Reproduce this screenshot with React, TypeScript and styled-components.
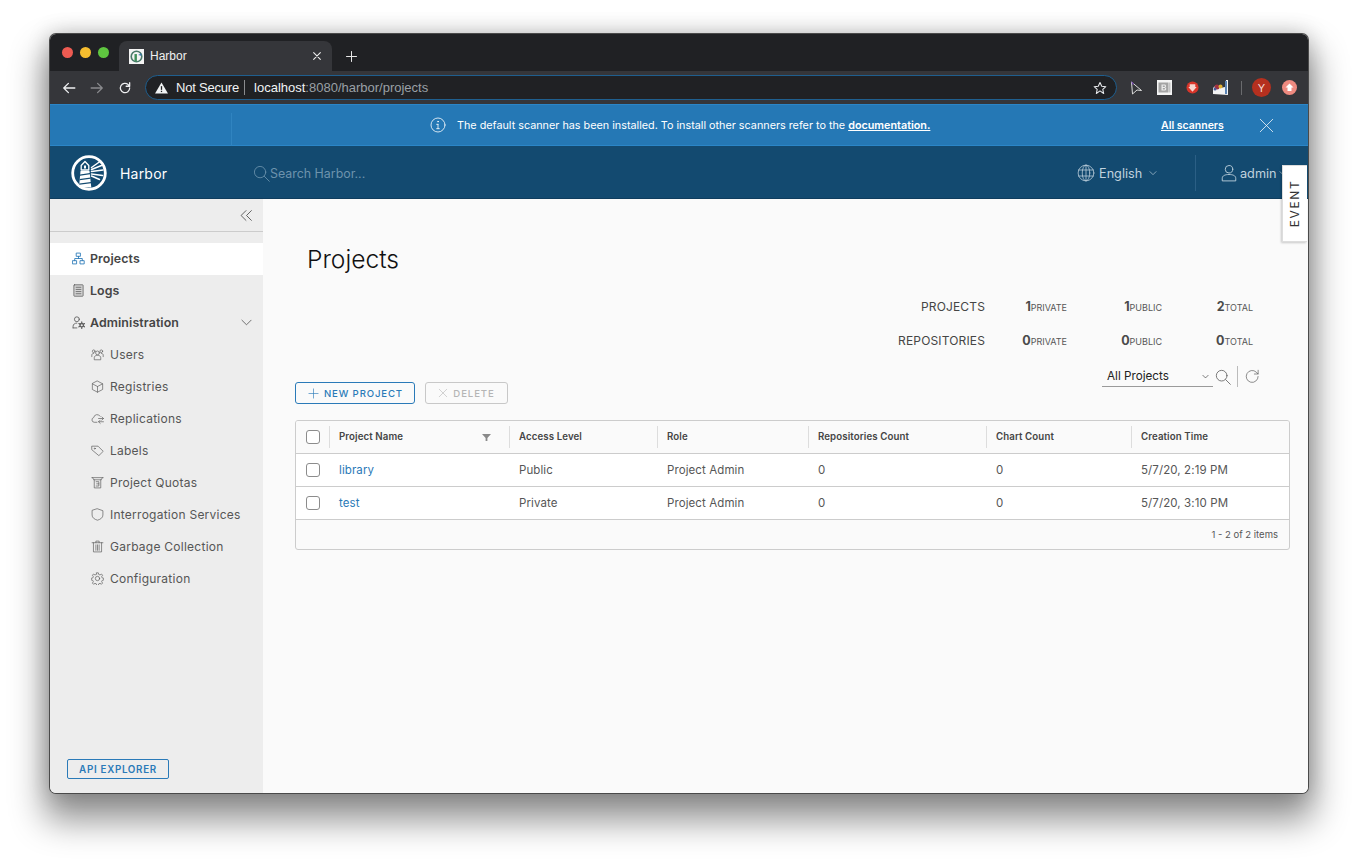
import React from "react";
import styled, { createGlobalStyle } from "styled-components";

const Global = createGlobalStyle`
  html, body { margin: 0; padding: 0; background: #fff; width: 1358px; height: 859px; overflow: hidden; }
  * { box-sizing: border-box; }
  body { font-family: Inter, "Liberation Sans", sans-serif; }
`;
const Page = styled.div`
  width: 1358px; height: 859px; padding: 34px 50px 66px 50px; background: #fff;
`;
const Win = styled.div`
  position: relative; width: 1258px; height: 759px; display: flex; flex-direction: column;
  border-radius: 6px; overflow: hidden; background: #fafafa;
  box-shadow: 0 0 0 1px #4a4a4a, 0 22px 34px 6px rgba(0,0,0,.42), 0 0 22px rgba(0,0,0,.22);
`;
const TabStrip = styled.div`
  height: 37px; background: #202124; display: flex; align-items: flex-end; padding-left: 69px; flex: none; position: relative;
`;
const Lights = styled.div`
  position: absolute; left: 12px; top: 13px; display: flex; gap: 7px;
`;
const Light = styled.span<{ $c: string }>`
  width: 11px; height: 11px; border-radius: 50%; background: ${p => p.$c}; display: block;
`;
const Tab = styled.div`
  width: 213px; height: 30px; background: #35363a; border-radius: 8px 8px 0 0; display: flex; align-items: center;
  padding: 0 10px 0 10px; gap: 6px; color: #f0f0f0; font-family: "Liberation Sans", sans-serif; font-size: 12px;
`;
const Fav = styled.span`
  width: 15px; height: 15px; background: #f4f4f4; display: flex; align-items: center; justify-content: center; flex: none;
`;
const TabTitle = styled.span` flex: 1; `;
const NewTab = styled.span`
  display: flex; margin: 0 0 3px 12px; color: #e6e6e6; height: 24px; align-items: center;
`;
const Toolbar = styled.div`
  height: 33px; background: #35363a; display: flex; align-items: center; flex: none; padding-left: 12px; color: #e8eaed;
`;
const NavBtn = styled.span<{ $dim?: boolean }>`
  width: 14px; height: 14px; display: flex; align-items: center; justify-content: center; margin-right: 14px; color: ${p => p.$dim ? "#8a8b8e" : "#eeeff1"};
`;
const Omni = styled.div`
  width: 972px; height: 25px; margin-left: -1px; background: #202124; border: 1.5px solid #1f5f8f; border-radius: 13px; display: flex; align-items: center;
  padding: 0 9px 0 9px; font-family: "Liberation Sans", sans-serif; font-size: 13px; color: #f1f3f4;
`;
const Secure = styled.span`
  display: flex; align-items: center; gap: 8px; padding-right: 5px; border-right: 1px solid #8a8b8e; height: 15px; margin-right: 9px; letter-spacing: -.2px;
`;
const Host = styled.span` color: #f1f3f4; `;
const Path = styled.span` color: #9aa0a6; `;
const Star = styled.span` margin-left: auto; display: flex; color: #e8eaed; `;
const Exts = styled.div`
  display: flex; align-items: center; margin-left: 5px;
`;
const Ext = styled.span`
  display: flex; align-items: center; justify-content: center; width: 28px;
`;
const ExtSep = styled.span` width: 1px; height: 14px; background: #6a6b6e; margin: 0 10px 0 7px; `;
const Avatar = styled.span`
  width: 19px; height: 19px; border-radius: 50%; background: #b5301f; color: #f4dcd8; font: 11px "Liberation Sans", sans-serif;
  display: flex; align-items: center; justify-content: center; margin-right: 11px;
`;
const Banner = styled.div`
  height: 42px; background: #2578b5; border-top: 1px solid #2b86c8; border-bottom: 1px solid #2b86c8; flex: none; color: #fff; position: relative;
  display: flex; align-items: center; font-size: 10.8px; padding-left: 380px;
`;
const BannerRule = styled.span`
  position: absolute; left: 181px; top: 8px; bottom: -1px; width: 1px; background: #3084c0;
`;
const BannerIcon = styled.span` display: flex; margin-right: 11px; `;
const BannerLink = styled.a`
  color: #fff; font-weight: 600; text-decoration: underline; margin-left: 3px;
`;
const AllScanners = styled.a`
  position: absolute; left: 1111px; color: #fff; font-weight: 600; text-decoration: underline; font-size: 10.5px;
`;
const BannerClose = styled.span`
  position: absolute; left: 1209px; top: 13px; display: flex;
`;
const Header = styled.div`
  height: 53px; padding-top: 2px; background: #134a70; flex: none; display: flex; align-items: center; color: #fff; position: relative; border-bottom: 1px solid #0f3d5e;
`;
const Brand = styled.div`
  display: flex; align-items: center; padding-left: 21px; width: 203px; font-size: 14px; letter-spacing: .2px; gap: 13px;
`;
const Search = styled.div`
  display: flex; align-items: center; color: #6d93ad; font-size: 12.4px;
`;
const HeaderRight = styled.div`
  margin-left: auto; display: flex; align-items: center; color: #c0d2de; font-size: 12.7px; height: 100%;
`;
const Lang = styled.div`
  display: flex; align-items: center; gap: 4px; width: 118px;
`;
const LangChevron = styled.span` margin-left: 3px; display: flex; `;
const HSep = styled.span` width: 1px; height: 36px; background: #2b5f85; `;
const User = styled.div`
  display: flex; align-items: center; gap: 2px; padding-left: 24px; width: 112px;
`;
const EventTab = styled.div`
  position: absolute; right: 1px; top: 131px; width: 25px; height: 77px; background: #fff; border: 1px solid #ddd; border-right: 0;
  box-shadow: -1px 1px 2px rgba(0,0,0,.2); display: flex; align-items: center; justify-content: center;
  z-index: 2; font-size: 12px; color: #333; letter-spacing: 1.6px;
`;
const EventLabel = styled.span` transform: rotate(-90deg); white-space: nowrap; `;
const Body = styled.div` flex: 1; display: flex; min-height: 0; `;
const Side = styled.aside`
  width: 213px; background: #ededed; display: flex; flex-direction: column; flex: none;
`;
const Collapse = styled.div`
  height: 33px; border-bottom: 1px solid #ccc; display: flex; align-items: center; justify-content: flex-end; padding-right: 10px; margin-bottom: 11px; color: #444;
`;
const Item = styled.div<{ $active?: boolean; $sub?: boolean }>`
  height: 32px; display: flex; align-items: center; flex: none; padding-bottom: 1px;
  padding-left: ${p => p.$sub ? 41 : 22}px; gap: ${p => p.$sub ? 6 : 5}px;
  background: ${p => p.$active ? "#fff" : "transparent"};
  color: ${p => p.$sub ? "#565656" : "#454545"};
  font-size: ${p => p.$sub ? 12 : 12.4}px; font-weight: ${p => p.$sub ? 400 : 600};
  letter-spacing: ${p => p.$sub ? ".25px" : ".1px"};
`;
const ItemIcon = styled.span<{ $blue?: boolean }>`
  display: flex; width: 13px; height: 13px; color: ${p => p.$blue ? "#2a7ab8" : "#5f5f5f"}; flex: none;
`;
const ItemChevron = styled.span` margin-left: auto; margin-right: 11px; display: flex; color: #565656; `;
const ApiBtn = styled.button`
  margin: auto 0 14px 17px; width: 102px; height: 20px; background: transparent; border: 1px solid #2a7ab8; border-radius: 2px;
  color: #2a7ab8; font: 600 9.8px Inter, sans-serif; letter-spacing: .7px; padding: 0; flex: none;
`;
const Main = styled.main` flex: 1; background: #fafafa; padding: 0 18px 0 32px; display: flex; flex-direction: column; min-width: 0; `;
const Title = styled.h1`
  margin: 44px 0 0 12px; font-size: 24.6px; line-height: 32px; font-weight: 300; color: #111; height: 32px;
`;
const Stats = styled.div`
  margin-top: 15px; display: grid; grid-template-columns: 690px 82px 95px 91px; grid-auto-rows: 33.5px; align-items: center; justify-items: end;
`;
const StatLabel = styled.div` font-size: 12px; color: #454545; letter-spacing: .15px; `;
const StatVal = styled.div`
  display: flex; align-items: baseline; font-size: 9px; color: #565656;
`;
const StatNum = styled.b` font-size: 12.5px; font-weight: 700; color: #4a4a4a; `;
const ActionRow = styled.div`
  display: flex; align-items: flex-start; margin-top: 4px; height: 45px;
`;
const BtnNew = styled.button`
  height: 22px; width: 120px; margin-top: 21px; background: #fafafa; border: 1px solid #2a7ab8; border-radius: 3px; color: #2a7ab8;
  font: 500 9.6px Inter, sans-serif; letter-spacing: .85px; display: flex; align-items: center; gap: 5px; padding: 0 0 0 12px;
`;
const BtnDel = styled.button`
  height: 22px; width: 83px; margin: 21px 0 0 10px; background: #fafafa; border: 1px solid #c8c8c8; border-radius: 3px; color: #b5b5b5;
  font: 500 9.6px Inter, sans-serif; letter-spacing: .9px; display: flex; align-items: center; justify-content: center; gap: 5px; padding: 0;
`;
const Filter = styled.div`
  margin-left: auto; margin-right: 30px; margin-top: 5px; display: flex; align-items: center;
`;
const SelectBox = styled.div`
  width: 111px; height: 21px; border-bottom: 1px solid #9a9a9a; display: flex; align-items: center; justify-content: space-between; padding: 0 4px 0 5px;
  font-size: 11.7px; color: #222;
`;
const FilterIcon = styled.span` display: flex; margin-left: 2px; color: #5a5a5a; `;
const FilterSep = styled.span` width: 1px; height: 21px; background: #bbb; margin: 0 5px 0 6px; `;
const Table = styled.div`
  margin-top: 14px; border: 1px solid #ccc; border-radius: 3px; background: #fafafa; overflow: hidden;
`;
const Row = styled.div<{ $head?: boolean }>`
  display: grid; grid-template-columns: 33px 180px 148px 151px 178px 145px 1fr; align-items: center;
  height: 33px; padding-bottom: 1px; background: ${p => p.$head ? "#fafafa" : "#fff"}; border-bottom: 1px solid #ccc;
  font-size: 11.5px; color: #565656; letter-spacing: .1px;
`;
const HeadCell = styled.div`
  height: 22px; display: flex; align-items: center; padding-left: 9px; border-left: 1px solid #ddd; font-size: 9.7px; font-weight: 600; color: #454545; position: relative;
`;
const Cell = styled.div` padding-left: 10px; `;
const LinkCell = styled(Cell)` color: #2a7ab8; `;
const CheckCell = styled.div` display: flex; justify-content: center; padding-left: 1px; `;
const Check = styled.span`
  width: 14px; height: 14px; border: 1px solid #8c8c8c; border-radius: 3px; background: #fff; display: block;
`;
const HeadFilter = styled.span` position: absolute; right: 18px; top: 7px; display: flex; color: #8a8a8a; `;
const Foot = styled.div`
  height: 29px; display: flex; align-items: center; justify-content: flex-end; padding-right: 11px; font-size: 9.5px; color: #565656;
`;

const S = (p: { s?: number; sw?: number; children: React.ReactNode; vb?: string }) => (
  <svg width={p.s ?? 14} height={p.s ?? 14} viewBox={p.vb ?? "0 0 24 24"} fill="none" stroke="currentColor" strokeWidth={p.sw ?? 1.5} strokeLinecap="round" strokeLinejoin="round">{p.children}</svg>
);
const Close = ({ s = 12, sw = 1.5 }: { s?: number; sw?: number }) => <S s={s} sw={sw}><path d="M4 4l16 16M20 4L4 20" /></S>;
const SearchI = ({ s = 17 }: { s?: number }) => <S s={s} sw={1.2}><circle cx="10" cy="10" r="8" /><path d="M16 16l7 7" /></S>;
const Chevron = ({ s = 8 }: { s?: number }) => <S s={s} sw={2}><path d="M3 8l9 9 9-9" /></S>;

const Logo = () => (
  <svg width="36" height="36" viewBox="0 0 36 36">
    <circle cx="18" cy="18" r="16.3" fill="none" stroke="#fff" strokeWidth="2.8" />
    <path d="M14 6.500l3.800 4v4.500H10.200v-4.500z" fill="none" stroke="#fff" strokeWidth="1.300" strokeLinejoin="round" />
    <rect x="13" y="10.500" width="2" height="3" fill="#fff" />
    <path d="M9.500 16h9l1.800 16.500H8z" fill="#fff" />
    <g fill="#134a70">
      <path d="M9 19.500l10-1.500v1.300L9 20.800zM8.700 24l10.900-1.500v1.300L8.600 25.300zM8.400 28.500l11.600-1.600v1.300L8.300 29.800z" />
    </g>
    <g stroke="#fff" strokeWidth="1.500" fill="none" strokeLinecap="round">
      <path d="M20.500 12.500L29 6.500M20.500 14.500l10-4M20.500 16.500l11.500-1.500M20.500 19l11 1.500M20.500 21l8 3.500" />
    </g>
  </svg>
);

const sideIcons: Record<string, React.ReactNode> = {
  Projects: <S s={13} sw={1.6}><rect x="8.500" y="2" width="7" height="6" /><rect x="1.500" y="16" width="7" height="6" /><rect x="15.500" y="16" width="7" height="6" /><path d="M12 8v4M5 16v-4h14v4" /></S>,
  Logs: <S s={13} sw={1.500}><rect x="3.500" y="1.500" width="17" height="21" rx="1" fill="#d6d6d6" /><path d="M7.500 6h9M7.500 10h9M7.500 14h9M7.500 18h9" /></S>,
  Administration: <S s={13} sw={1.6}><circle cx="9" cy="6" r="4.500" /><path d="M2 22v-3c0-3.500 3-6 7-6M2 22h7" /><circle cx="18" cy="17" r="3.200" strokeWidth="2.400" /><path d="M18 11v2M18 21v2M12.800 14l1.700 1M21.500 19l1.700 1M12.800 20l1.700-1M21.500 15l1.700-1" strokeWidth="2.200" /></S>,
  Users: <S s={13} sw={1.3}><circle cx="12" cy="9" r="3.500" /><circle cx="5" cy="6" r="2.500" /><circle cx="19" cy="6" r="2.500" /><path d="M6 21v-3c0-3 2.500-4.500 6-4.500s6 1.500 6 4.500v3zM1.500 16v-3c0-2 1.500-3 3.500-3M22.500 16v-3c0-2-1.500-3-3.500-3" /></S>,
  Registries: <S s={13} sw={1.3}><path d="M12 2l9.500 5v10.500L12 22.500l-9.500-5V7zM2.500 7l9.500 5 9.500-5M12 12v10.500" /></S>,
  Replications: <S s={13} sw={1.3}><path d="M11 19H6a4.500 4.500 0 0 1-1-8.800A6.500 6.500 0 0 1 17 8M14 12h9M20 9l3 3-3 3M23 18h-9M17 15l-3 3 3 3" /></S>,
  Labels: <S s={13} sw={1.3}><path d="M2 4h11l9.500 9.500-8 8L2 11z" /><circle cx="7" cy="8.500" r="1" /></S>,
  "Project Quotas": <S s={13} sw={1.3}><path d="M1.500 3h21M3 3l2 4h14l2-4M6 7v15h12V7M9.500 10.500h5v8h-5M10.500 14.500h4" /></S>,
  "Interrogation Services": <S s={13} sw={1.3}><path d="M12 1.500l10 3.500v8c0 5-4.500 8-10 9.500C6.500 21 2 18 2 13V5z" /></S>,
  "Garbage Collection": <S s={13} sw={1.3}><path d="M2 5h20M9 5V2h6v3M4.500 5v17h15V5M9 9v10M12 9v10M15 9v10" /></S>,
  Configuration: <S s={13} sw={1.3}><circle cx="12" cy="12" r="4" /><path d="M10.500 1.500h3l.7 3 2.400 1 2.700-1.700 2.100 2.100-1.700 2.700 1 2.400 3 .7v3l-3 .7-1 2.400 1.700 2.700-2.100 2.100-2.700-1.700-2.400 1-.7 3h-3l-.7-3-2.400-1-2.700 1.700-2.100-2.100 1.700-2.700-1-2.400-3-.7v-3l3-.7 1-2.400-1.700-2.700 2.100-2.100 2.700 1.700 2.400-1z" /></S>,
};

const subs = ["Users", "Registries", "Replications", "Labels", "Project Quotas", "Interrogation Services", "Garbage Collection", "Configuration"];

const rows = [
  { name: "library", access: "Public", time: "5/7/20, 2:19 PM" },
  { name: "test", access: "Private", time: "5/7/20, 3:10 PM" },
];

const stats = [
  { label: "PROJECTS", v: ["1", "1", "2"] },
  { label: "REPOSITORIES", v: ["0", "0", "0"] },
];
const kinds = ["PRIVATE", "PUBLIC", "TOTAL"];

export default function App() {
  return (
    <Page>
      <Global />
      <Win>
        <TabStrip>
          <Lights><Light $c="#ee5b52" /><Light $c="#f6bd2f" /><Light $c="#5fc640" /></Lights>
          <Tab>
            <Fav>
              <svg width="13" height="13" viewBox="0 0 16 16"><circle cx="8" cy="8" r="6.500" fill="none" stroke="#4a7a6a" strokeWidth="2" /><rect x="5.500" y="5" width="3" height="9" fill="#3f8f5a" /><path d="M10 6l4-2v3z" fill="#3a78b0" /></svg>
            </Fav>
            <TabTitle>Harbor</TabTitle>
            <Close s={10} sw={2.600} />
          </Tab>
          <NewTab><S s={15} sw={1.600}><path d="M12 4v16M4 12h16" /></S></NewTab>
        </TabStrip>
        <Toolbar>
          <NavBtn><S s={14} sw={2.200}><path d="M22 12H3M11 4l-8 8 8 8" /></S></NavBtn>
          <NavBtn $dim><S s={14} sw={2.200}><path d="M2 12h19M13 4l8 8-8 8" /></S></NavBtn>
          <NavBtn><S s={16} sw={2.200}><path d="M20 12a8 8 0 1 1-2.500-5.800L20 9M20 3v6h-6" /></S></NavBtn>
          <Omni>
            <Secure>
              <svg width="13" height="12" viewBox="0 0 14 13"><path d="M7 .5l7 12H0z" fill="#f1f3f4" /><rect x="6.300" y="4.500" width="1.400" height="4" fill="#202124" /><rect x="6.300" y="9.500" width="1.400" height="1.400" fill="#202124" /></svg>
              Not Secure
            </Secure>
            <Host>localhost</Host><Path>:8080/harbor/projects</Path>
            <Star><S s={14} sw={1.800}><path d="M12 2.500l3 6.500 7 .8-5.200 4.700 1.500 7L12 17l-6.300 4.500 1.500-7L2 9.800 9 9z" /></S></Star>
          </Omni>
          <Exts>
            <Ext><svg width="13" height="14" viewBox="0 0 13 14"><path d="M1.500 1l10 8.500-4.500-.5L2.500 13z" fill="none" stroke="#ddd" strokeWidth="1" /><path d="M1 0l1.500 4L4 2.500z" fill="#6a3fa0" /></svg></Ext>
            <Ext><svg width="15" height="15" viewBox="0 0 15 15"><rect width="15" height="15" fill="#f4f4f4" /><rect x="1.500" y="2.500" width="10" height="10" fill="#a4a4a4" /><rect x="12" y="2.500" width="1.500" height="10" fill="#c4c4c4" /><path d="M4.500 4.500h3c2 0 2 2.800.5 3 1.800.2 1.800 3-.5 3h-3zM5.800 5.500v1.500h1.500c.9 0 .9-1.500 0-1.500zM5.800 8v1.500h1.600c1 0 1-1.500 0-1.500z" fill="#ececec" fillRule="evenodd" /></svg></Ext>
            <Ext><svg width="13" height="13" viewBox="0 0 14 14"><circle cx="7" cy="7" r="6.500" fill="#d8352a" /><path d="M4 3.500h6v3h1.500L7 11.500 2.500 6.500H4z" fill="#f6d5d0" /></svg></Ext>
            <Ext><svg width="16" height="15" viewBox="0 0 16 15"><path d="M1 14V8l3-3 4 3 5-1 1-7h2v15z" fill="#f2f2f2" /><rect x="13" y="1" width="2" height="13" fill="#5a83b3" /><circle cx="5" cy="7" r="2.500" fill="#a03040" /><circle cx="8.500" cy="6.500" r="2" fill="#e0b030" /><circle cx="3" cy="9" r="1.500" fill="#4a5a9a" /></svg></Ext>
            <ExtSep />
            <Avatar>Y</Avatar>
            <svg width="15" height="15" viewBox="0 0 15 15"><circle cx="7.500" cy="7.500" r="7.500" fill="#ee8a80" /><path d="M7.500 3.500l4 4H9.500v3.500h-4V7.500h-2z" fill="#fff" /></svg>
          </Exts>
        </Toolbar>
        <Banner>
          <BannerRule />
          <BannerIcon><S s={16} sw={1.200}><circle cx="12" cy="12" r="10.500" /><path d="M12 11v6.500M10 17.500h4M10 11h2" /><circle cx="12" cy="7" r=".6" /></S></BannerIcon>
          The default scanner has been installed. To install other scanners refer to the
          <BannerLink>documentation.</BannerLink>
          <AllScanners>All scanners</AllScanners>
          <BannerClose><S s={15} sw={1.200}><path d="M2 2l20 20M22 2L2 22" /></S></BannerClose>
        </Banner>
        <Header>
          <Brand><Logo />Harbor</Brand>
          <Search><SearchI />Search Harbor...</Search>
          <HeaderRight>
            <Lang>
              <S s={18} sw={1}><circle cx="12" cy="12" r="10.500" /><ellipse cx="12" cy="12" rx="5" ry="10.500" /><path d="M12 1.500v21M2 8h20M2 16h20" /></S>
              English
              <LangChevron><Chevron /></LangChevron>
            </Lang>
            <HSep />
            <User>
              <S s={18} sw={1.200}><circle cx="12" cy="7" r="5" /><path d="M3 22v-3c0-3.500 4-5 9-5s9 1.500 9 5v3z" /></S>
              admin
              <Chevron />
            </User>
          </HeaderRight>
        </Header>
        <EventTab><EventLabel>EVENT</EventLabel></EventTab>
        <Body>
          <Side>
            <Collapse><S s={13} sw={1.500}><path d="M11 3l-9 9 9 9M21 3l-9 9 9 9" /></S></Collapse>
            <Item $active><ItemIcon $blue>{sideIcons.Projects}</ItemIcon>Projects</Item>
            <Item><ItemIcon>{sideIcons.Logs}</ItemIcon>Logs</Item>
            <Item><ItemIcon>{sideIcons.Administration}</ItemIcon>Administration<ItemChevron><S s={11} sw={1.800}><path d="M2 7l10 10L22 7" /></S></ItemChevron></Item>
            {subs.map(s => (
              <Item $sub key={s}><ItemIcon>{sideIcons[s]}</ItemIcon>{s}</Item>
            ))}
            <ApiBtn>API EXPLORER</ApiBtn>
          </Side>
          <Main>
            <Title>Projects</Title>
            <Stats>
              {stats.map(r => (
                <React.Fragment key={r.label}>
                  <StatLabel>{r.label}</StatLabel>
                  {r.v.map((n, i) => <StatVal key={i}><StatNum>{n}</StatNum>{kinds[i]}</StatVal>)}
                </React.Fragment>
              ))}
            </Stats>
            <ActionRow>
              <BtnNew><S s={11} sw={1.400}><path d="M12 2v20M2 12h20" /></S>NEW PROJECT</BtnNew>
              <BtnDel><S s={10} sw={1.400}><path d="M3 3l18 18M21 3L3 21" /></S>DELETE</BtnDel>
              <Filter>
                <SelectBox>All Projects<Chevron s={7} /></SelectBox>
                <FilterIcon><SearchI s={16} /></FilterIcon>
                <FilterSep />
                <FilterIcon><S s={15} sw={1.100}><path d="M21 12a9.500 9.500 0 1 1-3-7L21 8M21 2v6h-6" /></S></FilterIcon>
              </Filter>
            </ActionRow>
            <Table>
              <Row $head>
                <CheckCell><Check /></CheckCell>
                <HeadCell>Project Name<HeadFilter><svg width="9" height="9" viewBox="0 0 10 10"><path d="M0 1h10L6 5.500V9H4V5.500z" fill="currentColor" /></svg></HeadFilter></HeadCell>
                <HeadCell>Access Level</HeadCell>
                <HeadCell>Role</HeadCell>
                <HeadCell>Repositories Count</HeadCell>
                <HeadCell>Chart Count</HeadCell>
                <HeadCell>Creation Time</HeadCell>
              </Row>
              {rows.map(r => (
                <Row key={r.name}>
                  <CheckCell><Check /></CheckCell>
                  <LinkCell>{r.name}</LinkCell>
                  <Cell>{r.access}</Cell>
                  <Cell>Project Admin</Cell>
                  <Cell>0</Cell>
                  <Cell>0</Cell>
                  <Cell>{r.time}</Cell>
                </Row>
              ))}
              <Foot>1 - 2 of 2 items</Foot>
            </Table>
          </Main>
        </Body>
      </Win>
    </Page>
  );
}
